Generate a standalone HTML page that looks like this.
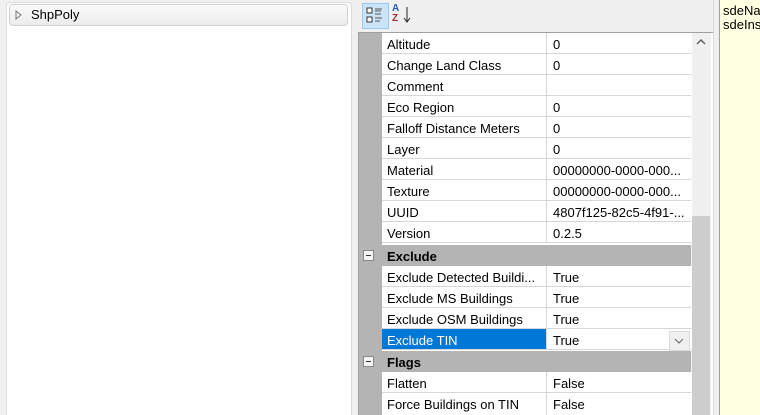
<!DOCTYPE html>
<html style="overflow:hidden;height:415px"><head><style>
body{margin:0;width:760px;height:415px;background:#f0f0f0;font-family:"Liberation Sans",sans-serif;font-size:13px;position:relative;overflow:hidden;color:#000}
.a{position:absolute}
.row{position:absolute;left:382px;width:309px;height:20px;border-bottom:1px solid #d6d6d6;background:#fff}
.row .n{position:absolute;left:5px;top:4px;width:158px;white-space:nowrap;overflow:hidden}
.row .v{position:absolute;left:164px;top:0;height:20px;width:145px;border-left:1px solid #d6d6d6;background:#fff}
.row .v span{position:absolute;left:6px;top:4px;white-space:nowrap}
.cat{position:absolute;left:359px;width:332px;height:21px;background:#b4b4b4;font-weight:bold;font-size:13px}
.cat b{position:absolute;left:28px;top:4px}
.cat i{position:absolute;left:4px;top:5px;width:9px;height:9px;border:1px solid #888;background:#f4f4f4}
.cat i:after{content:"";position:absolute;left:2px;top:4px;width:5px;height:1px;background:#333}
</style></head><body>
<div class="a" style="left:6px;top:2px;width:344px;height:413px;background:#fff;border:1px solid #dcdcdc;border-bottom:none;border-radius:4px 4px 0 0"></div>
<div class="a" style="left:9px;top:4px;width:337px;height:20px;border:1px solid #d0d0d0;border-radius:4px;background:linear-gradient(#fafafa,#ececec)"></div>
<svg class="a" style="left:15px;top:10px" width="8" height="10"><path d="M1 1 L6 5 L1 9 Z" fill="none" stroke="#777"/></svg>
<div class="a" style="left:31px;top:7px;font-size:13px">ShpPoly</div>

<div class="a" style="left:362px;top:3px;width:25px;height:24px;background:#cce4f7;border:1px solid #99c9ef"></div>
<svg class="a" style="left:366px;top:7px" width="20" height="18"><rect x="1" y="1" width="5" height="5" fill="#fff" stroke="#333"/><rect x="1" y="10" width="5" height="5" fill="#fff" stroke="#333"/><path d="M9 2h7M9 4h6M9 7h6M9 11h7M9 14h5" stroke="#555"/></svg>
<div class="a" style="left:392px;top:4px;font-size:10px;font-weight:bold;line-height:10px;color:#2a5db0">A<br><span style="color:#a03030">Z</span></div>
<svg class="a" style="left:403px;top:6px" width="8" height="18"><path d="M4 1V15M1 12l3 4 3-4" stroke="#222" fill="none"/></svg>

<div class="a" style="left:358px;top:32px;width:354px;height:383px;background:#fff;border:1px solid #a0a0a0;border-bottom:none"></div>
<div class="a" style="left:359px;top:33px;width:23px;height:382px;background:#b4b4b4"></div>
<div class="a" style="left:691px;top:33px;width:20px;height:382px;background:#f0f0f0"></div>
<div class="a" style="left:692px;top:216px;width:18px;height:199px;background:#cdcdcd"></div>
<svg class="a" style="left:695px;top:38px" width="12" height="8"><path d="M2 6l4-4 4 4" stroke="#606060" stroke-width="1.5" fill="none"/></svg>
<div class="a" style="left:713px;top:0;width:1px;height:415px;background:#dadada"></div>
<div class="a" style="left:719px;top:0;width:1px;height:415px;background:#a0a0a0"></div>
<div class="a" style="left:720px;top:0;width:40px;height:415px;background:#ffffe1"></div>
<div class="a" style="left:723px;top:4px;line-height:14px">sdeNa<br>sdeIns</div>

<div class="row" style="top:33px"><div class="n">Altitude</div><div class="v"><span>0</span></div></div>
<div class="row" style="top:54px"><div class="n">Change Land Class</div><div class="v"><span>0</span></div></div>
<div class="row" style="top:75px"><div class="n">Comment</div><div class="v"><span></span></div></div>
<div class="row" style="top:96px"><div class="n">Eco Region</div><div class="v"><span>0</span></div></div>
<div class="row" style="top:117px"><div class="n">Falloff Distance Meters</div><div class="v"><span>0</span></div></div>
<div class="row" style="top:138px"><div class="n">Layer</div><div class="v"><span>0</span></div></div>
<div class="row" style="top:159px"><div class="n">Material</div><div class="v"><span>00000000-0000-000...</span></div></div>
<div class="row" style="top:180px"><div class="n">Texture</div><div class="v"><span>00000000-0000-000...</span></div></div>
<div class="row" style="top:201px"><div class="n">UUID</div><div class="v"><span>4807f125-82c5-4f91-...</span></div></div>
<div class="row" style="top:222px"><div class="n">Version</div><div class="v"><span>0.2.5</span></div></div>
<div class="cat" style="top:245px"><i></i><b>Exclude</b></div>
<div class="row" style="top:266px"><div class="n">Exclude Detected Buildi...</div><div class="v"><span>True</span></div></div>
<div class="row" style="top:287px"><div class="n">Exclude MS Buildings</div><div class="v"><span>True</span></div></div>
<div class="row" style="top:308px"><div class="n">Exclude OSM Buildings</div><div class="v"><span>True</span></div></div>
<div class="row" style="top:329px;background:#0078d7"><div class="n" style="color:#fff">Exclude TIN</div><div class="v"><span>True</span></div></div>
<div class="a" style="left:669px;top:331px;width:19px;height:18px;background:#f0f0f0;border:1px solid #dadada"></div>
<svg class="a" style="left:673px;top:337px" width="12" height="8"><path d="M2 2l4 4 4-4" stroke="#666" fill="none"/></svg>
<div class="cat" style="top:351px"><i></i><b>Flags</b></div>
<div class="row" style="top:372px"><div class="n">Flatten</div><div class="v"><span>False</span></div></div>
<div class="row" style="top:393px;height:22px;border-bottom:none"><div class="n">Force Buildings on TIN</div><div class="v" style="height:22px"><span>False</span></div></div>
</body></html>
